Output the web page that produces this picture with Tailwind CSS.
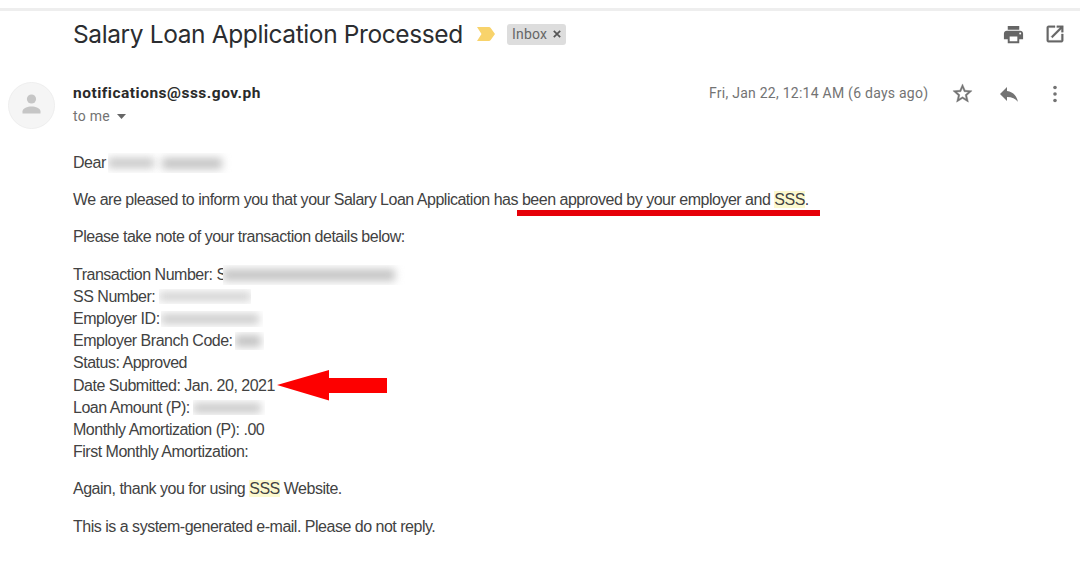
<!DOCTYPE html>
<html lang="en">
<head>
    <meta charset="UTF-8">
    <meta name="viewport" content="width=device-width, initial-scale=1.0">
    <title>Salary Loan Application Processed</title>
    <script src="https://cdn.jsdelivr.net/npm/@tailwindcss/browser@4"></script>
</head>
<body class="bg-white h-[566px] overflow-hidden">
    <div class="mt-2 h-[3px] bg-[#eeeeee]"></div>

    <!-- Subject -->
    <header class="flex items-center h-[46px] pl-[73px] pr-[14px]">
        <h1 class="font-['Inter',sans-serif] text-[24.5px] tracking-[-0.39px] text-[#2b2d30] whitespace-nowrap w-[404px]">Salary Loan Application Processed</h1>
        <svg class="w-[18px] h-[14px]" viewBox="0 0 18 14"><path d="M0 0h12q1 0 1.700 1L18 7l-4.300 6q-.7 1-1.700 1H0l4.500-7z" fill="#f8d36b"/></svg>
        <div class="ml-[12px] flex items-center h-[21px] w-[59px] pl-[5px] rounded-[3px] bg-[#dddddd] text-[#666666] font-['Roboto',sans-serif] text-[14px] tracking-[0.2px]">
            <span class="w-[41px]">Inbox</span>
            <svg class="w-[8px] h-[8px]" viewBox="0 0 8 8"><path d="M.8.8l6.400 6.400M7.200.8L.8 7.200" stroke="#555555" stroke-width="1.700"/></svg>
        </div>
        <div class="ml-auto flex items-center gap-[19px] text-[#666666]">
            <svg class="w-[23px] h-[23px]" viewBox="0 0 24 24" fill="currentColor"><path d="M19 8H5c-1.660 0-3 1.340-3 3v6h4v4h12v-4h4v-6c0-1.660-1.340-3-3-3zm-3 11H8v-5h8v5zm3-7c-.55 0-1-.45-1-1s.45-1 1-1 1 .45 1 1-.45 1-1 1zm-1-9H6v4h12V3z"/></svg>
            <svg class="w-[22px] h-[22px]" viewBox="0 0 24 24" fill="currentColor" stroke="currentColor" stroke-width=".4"><path d="M19 19H5V5h7V3H5c-1.110 0-2 .9-2 2v14c0 1.100.89 2 2 2h14c1.100 0 2-.9 2-2v-7h-2v7zM14 3v2h3.590l-9.830 9.830 1.410 1.410L19 6.410V10h2V3h-7z"/></svg>
        </div>
    </header>

    <!-- Sender -->
    <div class="flex mt-[25px] h-[47px] pl-2 pr-[13px] font-['Roboto',sans-serif] text-[#737373]">
        <svg class="w-[47px] h-[47px]" viewBox="0 0 47 47"><circle cx="23.500" cy="23.500" r="23" fill="#f5f5f5" stroke="#eeeeee"/><circle cx="23.500" cy="17" r="4.600" fill="#c6c6c6"/><path d="M14.500 31.500v-2c0-3.300 5-5 9-5s9 1.700 9 5v2z" fill="#c6c6c6"/></svg>
        <div class="ml-[18px]">
            <div class="h-[23px] leading-[23px] text-[15.5px] tracking-[0.5px] font-bold text-[#2a2a2a]">notifications@sss.gov.ph</div>
            <div class="flex items-center h-[23px] text-[14px] tracking-[0.25px]">
                <span>to me</span>
                <svg class="ml-[7px] w-[9px] h-[5px]" viewBox="0 0 9 5"><path d="M0 0h9L4.500 5z" fill="#666666"/></svg>
            </div>
        </div>
        <div class="ml-auto flex items-center h-[23px] text-[14px]">
            <span class="w-[242px] tracking-[0.25px] whitespace-nowrap">Fri, Jan 22, 12:14 AM (6 days ago)</span>
            <svg class="w-[23px] h-[23px]" viewBox="0 0 24 24" fill="currentColor" stroke="currentColor" stroke-width=".4"><path d="M22 9.240l-7.190-.62L12 2 9.190 8.630 2 9.240l5.460 4.730L5.820 21 12 17.270 18.180 21l-1.630-7.030L22 9.240zM12 15.400l-3.760 2.270 1-4.280-3.320-2.880 4.380-.38L12 6.100l1.710 4.040 4.380.38-3.320 2.880 1 4.280L12 15.400z"/></svg>
            <svg class="ml-[23px] w-6 h-6" viewBox="0 0 24 24" fill="currentColor"><path d="M10 9V5l-7 7 7 7v-4.100c5 0 8.500 1.600 11 5.100-1-5-4-10-11-11z"/></svg>
            <svg class="ml-[22px] w-6 h-6" viewBox="0 0 24 24" fill="currentColor"><circle cx="12" cy="5.500" r="1.800"/><circle cx="12" cy="12" r="1.800"/><circle cx="12" cy="18.500" r="1.800"/></svg>
        </div>
    </div>

    <!-- Message -->
    <main class="mt-[23px] pl-[73px] flex flex-col gap-[15px] font-['Liberation_Sans',Arial,sans-serif] text-[16px] tracking-[-0.49px] leading-[22.2px] text-[#424242] whitespace-nowrap">
        <div class="flex items-center">
            <span class="w-[35px]">Dear</span>
            <div class="w-[124px] h-[20px] overflow-hidden flex items-center gap-2">
                <div class="w-[46px] h-[10px] bg-[#c6c6c6] blur-[4px]"></div>
                <div class="w-[60px] h-[11px] bg-[#c2c2c2] blur-[4px]"></div>
            </div>
        </div>
        <div class="relative">We are pleased to inform you that your Salary Loan Application has been approved by your employer and <span class="bg-[#fcf9cf]">SSS</span>.
            <div class="absolute left-[444px] top-[21px] w-[303px] h-[6px] bg-[#e60008]"></div>
        </div>
        <p>Please take note of your transaction details below:</p>
        <div>
            <div class="flex items-center">
                <span class="w-[150px]">Transaction Number: S</span>
                <div class="w-[182px] h-[20px] overflow-hidden bg-white relative flex items-center"><div class="w-[172px] h-[12px] bg-[#c4c4c4] blur-[4px]"></div></div>
            </div>
            <div class="flex items-center">
                <span class="w-[86px]">SS Number:</span>
                <div class="w-[92px] h-[15px] overflow-hidden flex items-center"><div class="w-[92px] h-[9px] bg-[#d0d0d0] blur-[4px]"></div></div>
            </div>
            <div class="flex items-center">
                <span class="w-[88px]">Employer ID:</span>
                <div class="w-[102px] h-[16px] overflow-hidden flex items-center"><div class="w-[98px] h-[10px] bg-[#cacaca] blur-[4px]"></div></div>
            </div>
            <div class="flex items-center">
                <span class="w-[162px]">Employer Branch Code:</span>
                <div class="w-[29px] h-[18px] overflow-hidden flex items-center"><div class="w-[26px] h-[12px] bg-[#c2c2c2] blur-[4px]"></div></div>
            </div>
            <p>Status: Approved</p>
            <div class="relative">Date Submitted: Jan. 20, 2021
                <svg class="absolute left-[204px] top-[-5px] w-[110px] h-[31px]" viewBox="0 0 110 31"><path d="M0 15L52 0v8h58v15H52v7.500z" fill="#fd0000"/></svg>
            </div>
            <div class="flex items-center">
                <span class="w-[120px]">Loan Amount (P):</span>
                <div class="w-[72px] h-[15px] overflow-hidden flex items-center"><div class="w-[68px] h-[10px] bg-[#c8c8c8] blur-[4px]"></div></div>
            </div>
            <p>Monthly Amortization (P): .00</p>
            <p>First Monthly Amortization:</p>
        </div>
        <p>Again, thank you for using <span class="bg-[#fcf9cf]">SSS</span> Website.</p>
        <p>This is a system-generated e-mail. Please do not reply.</p>
    </main>
</body>
</html>
